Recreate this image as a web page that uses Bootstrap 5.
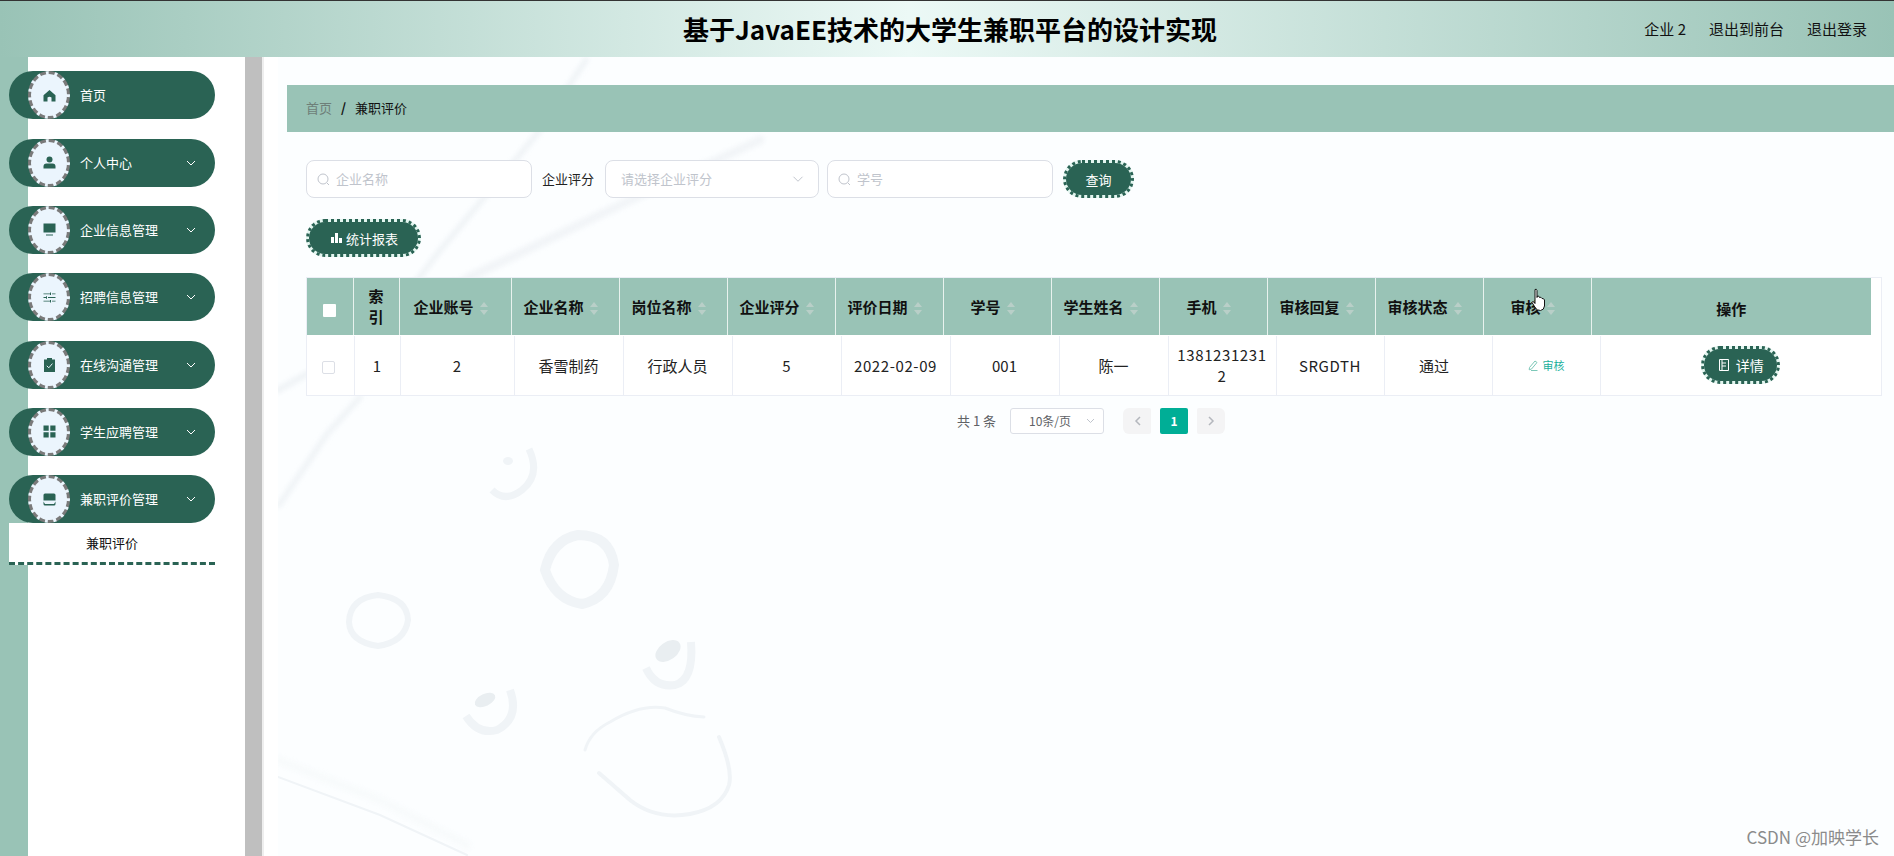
<!DOCTYPE html>
<html lang="zh">
<head>
    <meta charset="UTF-8">
    <title>基于JavaEE技术的大学生兼职平台的设计实现</title>
    <link href="https://cdn.jsdelivr.net/npm/bootstrap@5.3.3/dist/css/bootstrap.min.css" rel="stylesheet">
    <style>
        html, body { height: 100%; overflow: hidden; }
        body { font-family: "Noto Sans CJK SC", "Noto Sans", sans-serif; color: #222; background: #fff; }

        /* top bar */
        .top-bar { height: 57px; border-top: 1px solid #333; display: grid; grid-template-columns: 1fr auto 1fr; align-items: center;
            background: linear-gradient(90deg, #99c3b6 0%, #ecf9f6 48%, #99c3b6 100%); }
        .top-title { font-size: 26px; font-weight: 700; color: #000; margin: 0; padding-left: 6px; line-height: 1.2; }
        .top-links { font-size: 15px; color: #111; gap: 23px; padding-right: 27px; }

        .page-wrap { height: 799px; }

        /* sidebar */
        .side-menu { width: 245px; padding: 14.200px 30px 0 9px; flex: none; background: linear-gradient(90deg, #99c3b6 28px, #fff 28px); }
        .side-bar-line { width: 19px; flex: none; background: #bfbfbf; border-right: 2px solid #eee; }
        .menu-pill { height: 48px; margin-bottom: 19.33px; padding: 0 19px 0 19px; background: #2a6354; color: #fff; font-size: 13px; border-radius: 24px; }
        .menu-pill.is-open { margin-bottom: 0; }
        .menu-dot { width: 42px; height: 48px; margin-right: 10px; flex: none; border: 3px dashed #7a7a7a; border-radius: 50%; background: #ebf5fd; }
        .menu-sub { height: 42px; background: #fff; color: #111; font-size: 13px; border-bottom: 3px dashed #2a6354; }

        /* main */
        .main-zone { padding-left: 14px; background: #fff; min-width: 0; }
        .main-inner { height: 100%; padding: 28px 0 0 9px; background: #fcfeff; overflow: hidden; }
        .water-art { position: absolute; left: 0; top: 0; width: 100%; height: 100%; pointer-events: none; }
        .water-soft { filter: blur(2px); }
        .main-inner > *:not(.water-art) { position: relative; }

        .crumb-bar { height: 47px; padding: 0 0 2px 19px; background: #99c3b6; font-size: 13px; }
        .crumb-bar .breadcrumb { --bs-breadcrumb-margin-bottom: 0; --bs-breadcrumb-divider-color: #111; --bs-breadcrumb-item-padding-x: 9px; }
        .crumb-bar .breadcrumb-item { color: #111; }
        .crumb-bar .breadcrumb-item.crumb-home { color: #6e7f79; }
        .crumb-bar .breadcrumb-item + .breadcrumb-item::before { font-weight: 700; }

        .filter-row { margin: 28px 0 0 19px; gap: 8px; font-size: 13px; }
        .find-box { width: 226px; height: 38px; padding: 0 10px; gap: 6px; background: #fff; border: 1px solid #dcdfe6; border-radius: 8px; }
        .find-box input { border: 0; outline: 0; padding: 0; width: 100%; font-size: 13px; background: transparent; }
        .find-box input::placeholder { color: #c0c4cc; }
        .score-label { margin: 0 3px 0 2px; color: #222; }
        .score-pick { width: 214px; height: 38px; padding: 0 30px 0 15px; font-size: 13px; color: #c0c4cc; border: 1px solid #dcdfe6; border-radius: 8px;
            --bs-form-select-bg-img: url("data:image/svg+xml,%3csvg xmlns='http://www.w3.org/2000/svg' viewBox='0 0 16 16'%3e%3cpath fill='none' stroke='%23c0c4cc' stroke-width='1.3' d='M2 5l6 6 6-6'/%3e%3c/svg%3e"); }

        .dot-btn { --bs-btn-color: #fff; --bs-btn-hover-color: #fff; height: 38px; padding: 0 17px; font-size: 13px; color: #fff; border: 3px dotted #2a6354; border-radius: 19px;
            background: linear-gradient(#2a6354, #2a6354) padding-box, #e3f6f0 border-box; line-height: 1; }
        .dot-btn:hover { background: linear-gradient(#2a6354, #2a6354) padding-box, #e3f6f0 border-box; border-color: #2a6354; }
        .search-btn { margin-left: 2px; width: 71px; padding: 0; }
        .report-row { margin: 21px 0 0 19px; }
        .report-btn { width: 115px; padding: 0 0 0 2px; gap: 4px; }

        /* table */
        .data-wrap { width: 1576px; margin: 20px 0 0 19px; border: 1px solid #ebeef5; background: #fff; }
        .data-table { table-layout: fixed; margin: 0; text-align: center; font-size: 15px; }
        .data-table.head-part { width: 1564px; }
        .data-table.body-part { width: 1574px; }
        .data-table.head-part th { height: 57px; padding: 0 8px; background-color: #99c3b6; color: #111; font-weight: 700; line-height: 21px;
            vertical-align: middle; border-bottom: 1px solid #fff; border-right: 1px solid #e8f2ee; white-space: normal; }
        .data-table.head-part th:last-child { border-right: 0; padding-top: 4px; }
        .data-table.body-part td { height: 59px; padding: 0 8px; color: #222; line-height: 21px; vertical-align: middle; word-break: break-all;
            background-color: #fff; border-bottom: 0; border-right: 1px solid #ebeef5; }
        .data-table.body-part td:last-child { border-right: 0; }
        .data-table.body-part td.num-text { letter-spacing: .6px; }
        .data-table.body-part td.status-cell { padding-right: 16px; }
        .sort-mark { margin: 0 9px 0 6px; vertical-align: -2px; }
        .head-check { display: inline-block; width: 13px; height: 13px; background: #fff; margin-top: 4px; vertical-align: middle; border-radius: 1px; }
        .row-check { display: inline-block; width: 13px; height: 13px; background: #fff; border: 1px solid #dcdfe6; border-radius: 2px; vertical-align: middle; margin-right: 3px; }
        .audit-link { font-size: 11px; color: #1bb09c; gap: 5px; }
        .info-btn { width: 79px; padding: 0; gap: 6px; font-size: 14px; }
        .c-a { width: 46px; } .c-b { width: 112px; } .c-c { width: 108px; }
        .d-a { width: 47px; } .d-b { width: 46px; } .d-c { width: 114px; } .d-e { width: 109px; } .d-f { width: 108px; }

        /* pager */
        .pager-row { margin: 12px 0 0 19px; width: 1576px; font-size: 13px; color: #606266; }
        .pager-inner { margin-left: 651px; height: 26px; }
        .pager-size { width: 94px; height: 26px; margin: 0 19px 0 14px; padding: 0 8px 0 18px; font-size: 12px; background: #fff; border: 1px solid #dcdfe6; border-radius: 3px; color: #606266; }
        .pager-row .pagination { gap: 10px; margin: 0; --bs-pagination-border-width: 0; }
        .pager-row .page-link { width: 28px; height: 26px; padding: 0; display: flex; align-items: center; justify-content: center; background: #f4f4f5; color: #aab; font-size: 12px; border-radius: 2px; font-weight: 700; }
        .pager-row .active .page-link { background: #00ae96; color: #fff; }

        /* things on top of the page */
        .csdn-mark { position: absolute; right: 15px; bottom: 7px; color: #8b8b8b; font-size: 17px; }
        .hand-cursor { position: absolute; left: 1531px; top: 288px; }
    </style>
</head>
<body class="position-relative">

<header class="top-bar">
    <div></div>
    <h1 class="top-title">基于JavaEE技术的大学生兼职平台的设计实现</h1>
    <div class="top-links d-flex justify-content-end">
        <span>企业 2</span>
        <span>退出到前台</span>
        <span>退出登录</span>
    </div>
</header>

<div class="page-wrap d-flex">
    <aside class="side-menu">
        <div class="menu-pill d-flex align-items-center">
            <span class="menu-dot d-flex align-items-center justify-content-center">
                <svg width="13" height="13" viewBox="0 0 13 13" fill="#2a6354"><path d="M6.5 1 12.5 6.2V12.500H8.500V8.500Q6.500 7 4.500 8.500V12.500H.5V6.200Z"/></svg>
            </span>
            <span class="flex-grow-1">首页</span>
        </div>
        <div class="menu-pill d-flex align-items-center">
            <span class="menu-dot d-flex align-items-center justify-content-center">
                <svg width="13" height="13" viewBox="0 0 13 13" fill="#2a6354"><circle cx="6.500" cy="3.400" r="3"/><path d="M.5 12.500V10.500Q.5 7.600 3.500 7.600H9.500Q12.500 7.600 12.500 10.500V12.500Z"/></svg>
            </span>
            <span class="flex-grow-1">个人中心</span>
            <svg width="10" height="6" viewBox="0 0 10 6" fill="none" stroke="#fff"><path d="M1 1l4 4 4-4"/></svg>
        </div>
        <div class="menu-pill d-flex align-items-center">
            <span class="menu-dot d-flex align-items-center justify-content-center">
                <svg width="13" height="13" viewBox="0 0 13 13" fill="#2a6354"><path d="M.5 .5H12.500V9.500H.5ZM3 11.500H10V12.500H3Z"/></svg>
            </span>
            <span class="flex-grow-1">企业信息管理</span>
            <svg width="10" height="6" viewBox="0 0 10 6" fill="none" stroke="#fff"><path d="M1 1l4 4 4-4"/></svg>
        </div>
        <div class="menu-pill d-flex align-items-center">
            <span class="menu-dot d-flex align-items-center justify-content-center">
                <svg width="13" height="13" viewBox="0 0 13 13" fill="#2a6354"><path d="M.5 2.500H7V1.500H8V4H7V3.300H.5ZM9 2.500H12.500V3.300H9ZM.5 6.100H3V5.300H4V7.800H3V6.900H.5ZM5 6.100H12.500V6.900H5ZM.5 9.800H7V9H8V11.500H7V10.600H.5ZM9 9.800H12.500V10.600H9Z"/></svg>
            </span>
            <span class="flex-grow-1">招聘信息管理</span>
            <svg width="10" height="6" viewBox="0 0 10 6" fill="none" stroke="#fff"><path d="M1 1l4 4 4-4"/></svg>
        </div>
        <div class="menu-pill d-flex align-items-center">
            <span class="menu-dot d-flex align-items-center justify-content-center">
                <svg width="13" height="14" viewBox="0 0 13 14"><path fill="#2a6354" d="M4 0H9V1.500H12V14H1V1.500H4Z"/><path fill="none" stroke="#ebf5fd" d="M3.800 7.800 5.800 9.800 9.400 5.600"/></svg>
            </span>
            <span class="flex-grow-1">在线沟通管理</span>
            <svg width="10" height="6" viewBox="0 0 10 6" fill="none" stroke="#fff"><path d="M1 1l4 4 4-4"/></svg>
        </div>
        <div class="menu-pill d-flex align-items-center">
            <span class="menu-dot d-flex align-items-center justify-content-center">
                <svg width="13" height="13" viewBox="0 0 13 13" fill="#2a6354"><path d="M.5 .5H5.700V5.700H.5ZM7.300 .5H12.500V5.700H7.300ZM.5 7.300H5.700V12.500H.5ZM7.300 7.300H12.500V12.500H7.300Z"/></svg>
            </span>
            <span class="flex-grow-1">学生应聘管理</span>
            <svg width="10" height="6" viewBox="0 0 10 6" fill="none" stroke="#fff"><path d="M1 1l4 4 4-4"/></svg>
        </div>
        <div class="menu-pill is-open d-flex align-items-center">
            <span class="menu-dot d-flex align-items-center justify-content-center">
                <svg width="13" height="13" viewBox="0 0 13 13" fill="#2a6354"><path d="M2 .5H11Q12.500 .5 12.500 2V7.500H.5V2Q.5 .5 2 .5ZM.5 8.500 2 11H11L12.500 8.500V11Q12.500 12.500 11 12.500H2Q.5 12.500 .5 11Z"/></svg>
            </span>
            <span class="flex-grow-1">兼职评价管理</span>
            <svg width="10" height="6" viewBox="0 0 10 6" fill="none" stroke="#fff"><path d="M1 1l4 4 4-4"/></svg>
        </div>
        <div class="menu-sub d-flex align-items-center justify-content-center">兼职评价</div>
    </aside>
    <div class="side-bar-line"></div>

    <main class="main-zone flex-grow-1">
        <div class="main-inner position-relative">
            <!-- 背景水印 -->
            <svg class="water-art" viewBox="278 57 1616 799" preserveAspectRatio="xMinYMin slice" fill="none" stroke="#f0f4f7" stroke-linecap="round">
                <g class="water-soft">
                    <path stroke-width="6" d="M586 60 537 134 437 254 395 310"/>
                    <path stroke-width="9" stroke="#f2f5f8" d="M760 140 637 197 470 277 400 325"/>
                    <path stroke-width="7" d="M278 390 307 374"/>
                    <path stroke-width="6" d="M360 397 327 434 279 505"/>
                    <path stroke-width="9" stroke="#f8fbfc" d="M278 760 380 800 467 845"/>
                </g>
                <path stroke-width="2" d="M278 777 380 815 467 855"/>
                <path stroke-width="7" stroke-linecap="butt" d="M529 449Q541 475 522 490 505 503 492 490"/>
                <ellipse cx="508" cy="461" rx="5" ry="4" fill="#f0f4f7" stroke="none"/>
                <path stroke-width="10" stroke-linecap="butt" d="M545 570Q552 540 578 535 610 535 614 565 610 598 582 604 555 600 545 570Z"/>
                <path stroke-width="6" stroke-linecap="butt" d="M349 622Q350 598 378 595 407 598 408 620 405 642 378 646 350 642 349 622Z"/>
                <path stroke-width="8" stroke-linecap="butt" d="M646 668Q655 688 675 685 694 680 691 642"/>
                <ellipse cx="668" cy="651" rx="14" ry="9" transform="rotate(-35 668 651)" fill="#e9eef1" stroke="none"/>
                <path stroke-width="8" stroke-linecap="butt" d="M466 716Q478 735 497 730 520 718 510 690"/>
                <ellipse cx="485" cy="700" rx="11" ry="6" transform="rotate(-25 485 700)" fill="#e9eef1" stroke="none"/>
                <path stroke-width="3" d="M585 750Q590 732 610 722 640 704 665 708 685 716 704 717"/>
                <path stroke-width="4" d="M719 737Q733 770 729 785 722 808 690 814 655 820 630 800L599 773"/>
            </svg>

            <div class="crumb-bar d-flex align-items-center">
                <ol class="breadcrumb">
                    <li class="breadcrumb-item crumb-home">首页</li>
                    <li class="breadcrumb-item">兼职评价</li>
                </ol>
            </div>

            <form class="filter-row d-flex align-items-center">
                <label class="find-box d-flex align-items-center">
                    <svg width="13" height="13" viewBox="0 0 13 13" fill="none" stroke="#c0c4cc" class="flex-shrink-0"><circle cx="6" cy="6" r="5"/><path d="M10 10l2 2"/></svg>
                    <input type="text" placeholder="企业名称">
                </label>
                <span class="score-label">企业评分</span>
                <select class="form-select score-pick">
                    <option>请选择企业评分</option>
                </select>
                <label class="find-box d-flex align-items-center">
                    <svg width="13" height="13" viewBox="0 0 13 13" fill="none" stroke="#c0c4cc" class="flex-shrink-0"><circle cx="6" cy="6" r="5"/><path d="M10 10l2 2"/></svg>
                    <input type="text" placeholder="学号">
                </label>
                <button type="button" class="btn dot-btn search-btn">查询</button>
            </form>

            <div class="report-row">
                <button type="button" class="btn dot-btn report-btn d-inline-flex align-items-center justify-content-center">
                    <svg width="11" height="10" viewBox="0 0 11 10" fill="#fff"><path d="M0 4H3V10H0ZM4 0H7V10H4ZM8 5H11V10H8Z"/></svg>
                    统计报表
                </button>
            </div>

            <div class="data-wrap">
                <table class="table data-table head-part">
                    <colgroup>
                        <col class="c-a"><col class="c-a"><col class="c-b"><col class="c-c"><col class="c-c"><col class="c-c"><col class="c-c"><col class="c-c"><col class="c-c"><col class="c-c"><col class="c-c"><col class="c-c"><col class="c-c"><col>
                    </colgroup>
                    <thead>
                    <tr>
                        <th><span class="head-check"></span></th>
                        <th>索引</th>
                        <th>企业账号<svg class="sort-mark" width="8" height="13" viewBox="0 0 8 13" fill="#b9cfc8"><path d="M4 0 8 5H0ZM4 13 0 8H8Z"/></svg></th>
                        <th>企业名称<svg class="sort-mark" width="8" height="13" viewBox="0 0 8 13" fill="#b9cfc8"><path d="M4 0 8 5H0ZM4 13 0 8H8Z"/></svg></th>
                        <th>岗位名称<svg class="sort-mark" width="8" height="13" viewBox="0 0 8 13" fill="#b9cfc8"><path d="M4 0 8 5H0ZM4 13 0 8H8Z"/></svg></th>
                        <th>企业评分<svg class="sort-mark" width="8" height="13" viewBox="0 0 8 13" fill="#b9cfc8"><path d="M4 0 8 5H0ZM4 13 0 8H8Z"/></svg></th>
                        <th>评价日期<svg class="sort-mark" width="8" height="13" viewBox="0 0 8 13" fill="#b9cfc8"><path d="M4 0 8 5H0ZM4 13 0 8H8Z"/></svg></th>
                        <th>学号<svg class="sort-mark" width="8" height="13" viewBox="0 0 8 13" fill="#b9cfc8"><path d="M4 0 8 5H0ZM4 13 0 8H8Z"/></svg></th>
                        <th>学生姓名<svg class="sort-mark" width="8" height="13" viewBox="0 0 8 13" fill="#b9cfc8"><path d="M4 0 8 5H0ZM4 13 0 8H8Z"/></svg></th>
                        <th>手机<svg class="sort-mark" width="8" height="13" viewBox="0 0 8 13" fill="#b9cfc8"><path d="M4 0 8 5H0ZM4 13 0 8H8Z"/></svg></th>
                        <th>审核回复<svg class="sort-mark" width="8" height="13" viewBox="0 0 8 13" fill="#b9cfc8"><path d="M4 0 8 5H0ZM4 13 0 8H8Z"/></svg></th>
                        <th>审核状态<svg class="sort-mark" width="8" height="13" viewBox="0 0 8 13" fill="#b9cfc8"><path d="M4 0 8 5H0ZM4 13 0 8H8Z"/></svg></th>
                        <th>审核<svg class="sort-mark" width="8" height="13" viewBox="0 0 8 13" fill="#b9cfc8"><path d="M4 0 8 5H0ZM4 13 0 8H8Z"/></svg></th>
                        <th>操作</th>
                    </tr>
                    </thead>
                </table>
                <table class="table data-table body-part">
                    <colgroup>
                        <col class="d-a"><col class="d-b"><col class="d-c"><col class="d-e"><col class="d-e"><col class="d-e"><col class="d-e"><col class="d-e"><col class="d-e"><col class="d-f"><col class="d-f"><col class="d-f"><col class="d-f"><col>
                    </colgroup>
                    <tbody>
                    <tr>
                        <td><span class="row-check"></span></td>
                        <td>1</td>
                        <td>2</td>
                        <td>香雪制药</td>
                        <td>行政人员</td>
                        <td>5</td>
                        <td class="num-text">2022-02-09</td>
                        <td>001</td>
                        <td>陈一</td>
                        <td class="num-text">13812312312</td>
                        <td class="num-text">SRGDTH</td>
                        <td class="status-cell">通过</td>
                        <td>
                            <span class="audit-link d-inline-flex align-items-center">
                                <svg width="10" height="11" viewBox="0 0 10 11" fill="none" stroke="#7cc8b8"><path d="M7 1 9 2.500 3.500 9 1.200 9.800 1.500 7.500ZM3 10.500H9.500"/></svg>
                                审核
                            </span>
                        </td>
                        <td>
                            <button type="button" class="btn dot-btn info-btn d-inline-flex align-items-center justify-content-center">
                                <svg width="12" height="12" viewBox="0 0 12 12" fill="none" stroke="#fff"><path d="M1.500 .5H10.500V11.500H1.500ZM4 .5V11.500M4 4H8M4 7H8"/></svg>
                                详情
                            </button>
                        </td>
                    </tr>
                    </tbody>
                </table>
            </div>

            <div class="pager-row">
                <div class="pager-inner d-flex align-items-center">
                    <span>共 1 条</span>
                    <span class="pager-size d-flex align-items-center justify-content-between">
                        10条/页
                        <svg width="9" height="6" viewBox="0 0 9 6" fill="none" stroke="#c0c4cc"><path d="M1 1l3.500 3.500L8 1"/></svg>
                    </span>
                    <ul class="pagination">
                        <li class="page-item"><span class="page-link"><svg width="7" height="10" viewBox="0 0 7 10" fill="none" stroke="#b4b7bd" stroke-width="1.500"><path d="M6 1 2 5l4 4"/></svg></span></li>
                        <li class="page-item active"><span class="page-link">1</span></li>
                        <li class="page-item"><span class="page-link"><svg width="7" height="10" viewBox="0 0 7 10" fill="none" stroke="#b4b7bd" stroke-width="1.500"><path d="M1 1l4 4-4 4"/></svg></span></li>
                    </ul>
                </div>
            </div>
        </div>
    </main>
</div>

<svg class="hand-cursor" width="16" height="24" viewBox="0 0 16 24">
    <path fill="#fff" stroke="#111" stroke-width="1" d="M4 1.500Q5.500 .5 6 2.500V9.500L6.500 8Q8 7.500 8.500 9.500 10 8.500 11 10.500 12.500 10 13.500 12V18Q13 22 9.500 22.500 6 22.500 4.500 20L1 14.500Q1 13 3 14L4 15.500Z"/>
</svg>
<div class="csdn-mark">CSDN @加映学长</div>

<script src="https://cdn.jsdelivr.net/npm/bootstrap@5.3.3/dist/js/bootstrap.bundle.min.js"></script>
</body>
</html>
